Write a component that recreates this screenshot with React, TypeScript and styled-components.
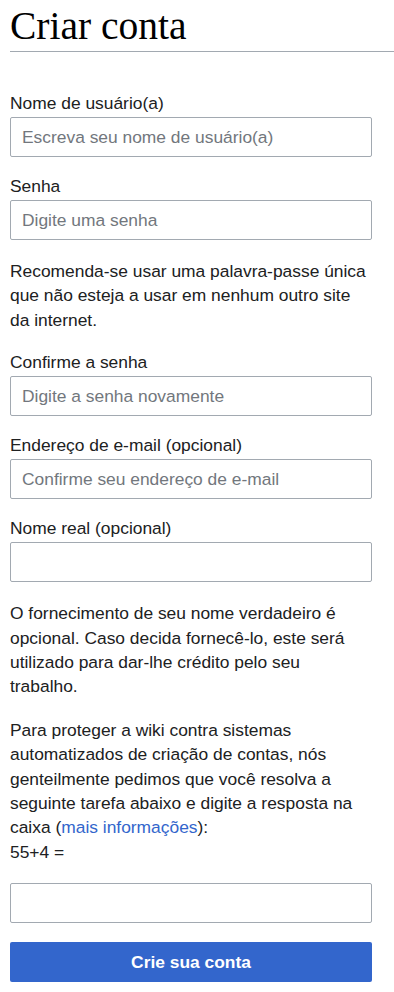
import React from "react";
import styled, { createGlobalStyle } from "styled-components";

const GlobalStyle = createGlobalStyle`
  html, body {
    margin: 0;
    padding: 0;
    background: #fff;
  }
  body {
    font-family: "Liberation Sans", Arial, sans-serif;
    color: #202122;
  }
`;

const Page = styled.div`
  padding: 0 0 0 10px;
  width: 384px;
`;

const Title = styled.h1`
  margin: 0;
  padding: 4px 0 3px;
  font-family: "Liberation Serif", "Times New Roman", serif;
  font-weight: normal;
  font-size: 39.5px;
  line-height: 44px;
  color: #000;
  border-bottom: 1px solid #a2a9b1;
`;

const Form = styled.form`
  display: flex;
  flex-direction: column;
  width: 362px;
  padding-top: 39px;
`;

const Field = styled.div<{ $gap?: number }>`
  display: flex;
  flex-direction: column;
  gap: 2px;
  margin-top: ${(p) => p.$gap ?? 17}px;
  &:first-child {
    margin-top: 0;
  }
`;

const Label = styled.label`
  font-size: 17.4px;
  line-height: 24px;
  color: #202122;
`;

const Input = styled.input`
  box-sizing: border-box;
  width: 100%;
  height: 40px;
  margin: 0;
  padding: 0 11px;
  border: 1px solid #a2a9b1;
  border-radius: 2px;
  font-family: "Liberation Sans", Arial, sans-serif;
  font-size: 17.4px;
  color: #202122;
  background: #fff;
  &::placeholder {
    color: #72777d;
    opacity: 1;
  }
`;

const Note = styled.p<{ $top: number }>`
  margin: ${(p) => p.$top}px 0 0;
  font-size: 17.4px;
  line-height: 24.4px;
  color: #202122;
`;

const Link = styled.a`
  color: #36c;
  text-decoration: none;
`;

const Submit = styled.button`
  box-sizing: border-box;
  width: 100%;
  height: 40px;
  margin-top: 19px;
  border: none;
  border-radius: 2px;
  background: #36c;
  color: #fff;
  font-family: "Liberation Sans", Arial, sans-serif;
  font-size: 17.4px;
  font-weight: bold;
`;

export default function App() {
  return (
    <>
      <GlobalStyle />
      <Page>
        <Title>Criar conta</Title>
        <Form onSubmit={(e) => e.preventDefault()}>
          <Field>
            <Label>Nome de usuário(a)</Label>
            <Input placeholder="Escreva seu nome de usuário(a)" />
          </Field>
          <Field>
            <Label>Senha</Label>
            <Input type="password" placeholder="Digite uma senha" />
          </Field>
          <Note $top={19}>
            Recomenda-se usar uma palavra-passe única que não esteja a usar em
            nenhum outro site da internet.
          </Note>
          <Field $gap={18}>
            <Label>Confirme a senha</Label>
            <Input type="password" placeholder="Digite a senha novamente" />
          </Field>
          <Field>
            <Label>Endereço de e-mail (opcional)</Label>
            <Input placeholder="Confirme seu endereço de e-mail" />
          </Field>
          <Field>
            <Label>Nome real (opcional)</Label>
            <Input />
          </Field>
          <Note $top={19}>
            O fornecimento de seu nome verdadeiro é opcional. Caso decida
            fornecê-lo, este será utilizado para dar-lhe crédito pelo seu
            trabalho.
          </Note>
          <Note $top={19}>
            Para proteger a wiki contra sistemas automatizados de criação de
            contas, nós genteilmente pedimos que você resolva a seguinte tarefa
            abaixo e digite a resposta na caixa (<Link href="#">mais informações</Link>):
            <br />
            55+4 =
          </Note>
          <Field $gap={19}>
            <Input />
          </Field>
          <Submit type="submit">Crie sua conta</Submit>
        </Form>
      </Page>
    </>
  );
}
